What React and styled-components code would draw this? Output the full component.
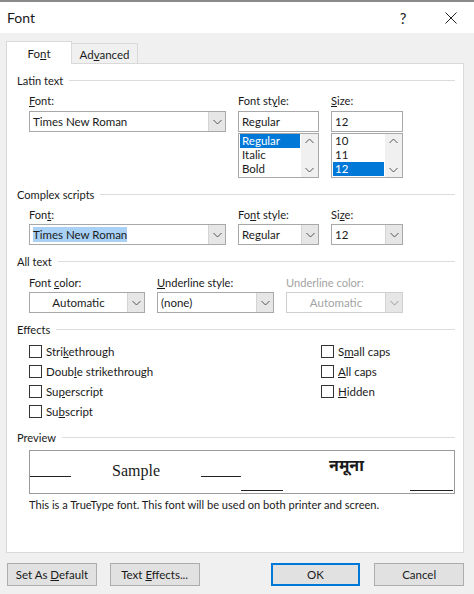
import React from "react";
import styled, { createGlobalStyle } from "styled-components";

const GlobalStyle = createGlobalStyle`
  html, body {
    margin: 0;
    padding: 0;
    background: #f0f0f0;
  }
  * {
    box-sizing: border-box;
  }
`;

const Dialog = styled.div`
  width: 474px;
  height: 594px;
  background: #f0f0f0;
  font-family: "Segoe UI", Lato, "Noto Sans", sans-serif;
  font-size: 11.1px;
  color: #1a1a1a;
  display: flex;
  flex-direction: column;
  overflow: hidden;
`;

const TopStrip = styled.div`
  height: 2px;
  background: #8a8a8a;
`;

const TitleBar = styled.div`
  height: 31px;
  background: #ffffff;
  display: flex;
  align-items: center;
  padding-left: 7px;
  font-size: 14px;
`;

const Title = styled.span`
  flex: 1;
`;

const TitleButton = styled.span`
  width: 46px;
  margin-right: ${(p) => p.$mr || 0}px;
  display: flex;
  justify-content: center;
  align-items: center;
  font-size: 15px;
  color: #222;
`;

const Body = styled.div`
  flex: 1;
  display: flex;
  flex-direction: column;
  padding: 8px 10px 0 6px;
`;

const Tabs = styled.div`
  display: flex;
  align-items: flex-end;
  height: 22px;
  position: relative;
  z-index: 1;
`;

const Tab = styled.div`
  width: 66px;
  height: ${(p) => (p.$active ? 23 : 20)}px;
  margin-bottom: ${(p) => (p.$active ? -1 : 0)}px;
  background: ${(p) => (p.$active ? "#ffffff" : "#f0f0f0")};
  border: 1px solid #d9d9d9;
  border-bottom: none;
  border-left: ${(p) => (p.$active ? "1px solid #d9d9d9" : "none")};
  display: flex;
  align-items: center;
  justify-content: center;
  font-size: 11.5px;
  padding-top: ${(p) => (p.$active ? 0 : 1)}px;
`;

const Panel = styled.div`
  height: 490px;
  background: #ffffff;
  border: 1px solid #d9d9d9;
  padding: 8px 8px 0 10px;
  display: flex;
  flex-direction: column;
`;

const SectionHeader = styled.div`
  display: flex;
  align-items: center;
  gap: 6px;
  height: 16px;
  margin-top: ${(p) => p.$mt || 0}px;
  span {
    white-space: nowrap;
  }
  &::after {
    content: "";
    flex: 1;
    border-top: 1px solid #dcdcdc;
  }
`;

const Indent = styled.div`
  padding-left: 12px;
  margin-top: ${(p) => p.$mt || 0}px;
`;

const FieldRow = styled.div`
  display: flex;
  gap: ${(p) => p.$gap || 12}px;
`;

const Field = styled.div`
  width: ${(p) => p.$w}px;
  display: flex;
  flex-direction: column;
`;

const Label = styled.div`
  height: 16px;
  line-height: 16px;
  margin-bottom: ${(p) => (p.$mb === undefined ? 2 : p.$mb)}px;
  color: ${(p) => (p.$disabled ? "#a3a3a3" : "#1a1a1a")};
`;

const TextBox = styled.div`
  height: 21px;
  border: 1px solid #a8a8a8;
  background: #fff;
  display: flex;
  align-items: center;
  padding-left: 3px;
  font-size: 11.5px;
`;

const Combo = styled.div`
  height: 21px;
  border: 1px solid ${(p) => (p.$disabled ? "#cfcfcf" : "#a8a8a8")};
  background: #fff;
  display: flex;
  align-items: stretch;
  font-size: 11.5px;
  color: ${(p) => (p.$disabled ? "#a3a3a3" : "#1a1a1a")};
`;

const ComboText = styled.div`
  flex: 1;
  display: flex;
  align-items: center;
  justify-content: ${(p) => (p.$center ? "center" : "flex-start")};
  padding-left: ${(p) => (p.$center ? 0 : 3)}px;
`;

const Selection = styled.span`
  background: #a9d1f5;
  line-height: 15px;
`;

const DropButton = styled.div`
  width: 17px;
  background: #e6e6e6;
  border-left: 1px solid #d4d4d4;
  display: flex;
  align-items: center;
  justify-content: center;
`;

const ListBox = styled.div`
  height: 45px;
  margin-top: 1px;
  border: 1px solid #a8a8a8;
  background: #fff;
  display: flex;
  overflow: hidden;
`;

const ListItems = styled.div`
  flex: 1;
  padding: 0 1px;
  display: flex;
  flex-direction: column;
`;

const ListItem = styled.div`
  height: 14px;
  line-height: 14px;
  padding-left: 2px;
  font-size: 11.5px;
  overflow: hidden;
  background: ${(p) => (p.$selected ? "#0078d7" : "transparent")};
  color: ${(p) => (p.$selected ? "#fff" : "#1a1a1a")};
`;

const ScrollBar = styled.div`
  width: 17px;
  background: #f0f0f0;
  display: flex;
  flex-direction: column;
  justify-content: space-between;
  align-items: center;
  padding: 4px 0;
`;

const Checks = styled.div`
  display: grid;
  grid-template-columns: 292px auto;
  grid-auto-flow: column;
  grid-template-rows: repeat(4, 20px);
  margin-top: 4px;
`;

const CheckRow = styled.label`
  display: flex;
  align-items: center;
  gap: 4px;
  font-size: 11.5px;
`;

const Box = styled.span`
  width: 13px;
  height: 13px;
  border: 1px solid #333;
  background: #fff;
`;

const PreviewBox = styled.div`
  height: 44px;
  margin-top: 5px;
  border: 1px solid #9a9a9a;
  display: flex;
  align-items: flex-start;
  overflow: hidden;
`;

const Blank = styled.span`
  width: ${(p) => p.$w}px;
  margin-top: ${(p) => p.$top}px;
  border-bottom: 1px solid #222;
  flex-shrink: 0;
`;

const SampleText = styled.span`
  width: ${(p) => p.$w}px;
  text-align: center;
  font-family: "Liberation Serif", "Times New Roman", serif;
  font-size: 16px;
  margin-top: ${(p) => p.$top}px;
  line-height: 20px;
  flex-shrink: 0;
`;

const DevaText = styled(SampleText)`
  font-family: "Noto Sans Devanagari", "Lohit Devanagari", "Noto Serif Devanagari", sans-serif;
  font-weight: 700;
  font-size: 16px;
`;

const InfoText = styled.div`
  margin-top: 3px;
  height: 16px;
  line-height: 16px;
`;

const ButtonRow = styled.div`
  display: flex;
  margin-top: 10px;
  padding-left: 1px;
`;

const Button = styled.div`
  width: 90px;
  height: 23px;
  background: #e1e1e1;
  border: 1px solid ${(p) => (p.$primary ? "#0078d7" : "#adadad")};
  box-shadow: ${(p) => (p.$primary ? "inset 0 0 0 1px #0078d7" : "none")};
  margin-left: ${(p) => p.$ml || 0}px;
  display: flex;
  align-items: center;
  justify-content: center;
  font-size: 11.5px;
`;

const Chevron = ({ up, color = "#555" }) => (
  <svg width="9" height="6" viewBox="0 0 9 6">
    <path
      d={up ? "M0.5 5 L4.5 1 L8.5 5" : "M0.5 1 L4.5 5 L8.5 1"}
      fill="none"
      stroke={color}
      strokeWidth="1"
    />
  </svg>
);

const CloseIcon = () => (
  <svg width="12" height="12" viewBox="0 0 12 12">
    <path d="M0.5 0.5 L11.5 11.5 M11.5 0.5 L0.5 11.5" stroke="#222" strokeWidth="1" />
  </svg>
);

const ComboBox = ({ children, center, disabled, highlight }) => (
  <Combo $disabled={disabled}>
    <ComboText $center={center}>
      {highlight ? <Selection>{children}</Selection> : <span>{children}</span>}
    </ComboText>
    <DropButton>
      <Chevron color={disabled ? "#999" : "#555"} />
    </DropButton>
  </Combo>
);

const Check = ({ children }) => (
  <CheckRow>
    <Box />
    <span>{children}</span>
  </CheckRow>
);

const List = ({ items, selected }) => (
  <ListBox>
    <ListItems>
      {items.map((it) => (
        <ListItem key={it} $selected={it === selected}>
          {it}
        </ListItem>
      ))}
    </ListItems>
    <ScrollBar>
      <Chevron up />
      <Chevron />
    </ScrollBar>
  </ListBox>
);

export default function App() {
  return (
    <>
      <GlobalStyle />
      <Dialog>
        <TopStrip />
        <TitleBar>
          <Title>Font</Title>
          <TitleButton $mr={2}>?</TitleButton>
          <TitleButton>
            <CloseIcon />
          </TitleButton>
        </TitleBar>
        <Body>
          <Tabs>
            <Tab $active>
              <span>
                Fo<u>n</u>t
              </span>
            </Tab>
            <Tab>
              <span>
                Ad<u>v</u>anced
              </span>
            </Tab>
          </Tabs>
          <Panel>
            <SectionHeader>
              <span>Latin text</span>
            </SectionHeader>
            <Indent $mt={5}>
              <FieldRow>
                <Field $w={197}>
                  <Label>
                    <u>F</u>ont:
                  </Label>
                  <ComboBox>Times New Roman</ComboBox>
                </Field>
                <Field $w={81}>
                  <Label>
                    Font st<u>y</u>le:
                  </Label>
                  <TextBox>Regular</TextBox>
                  <List items={["Regular", "Italic", "Bold"]} selected="Regular" />
                </Field>
                <Field $w={72}>
                  <Label>
                    <u>S</u>ize:
                  </Label>
                  <TextBox>12</TextBox>
                  <List items={["10", "11", "12"]} selected="12" />
                </Field>
              </FieldRow>
            </Indent>

            <SectionHeader $mt={8}>
              <span>Complex scripts</span>
            </SectionHeader>
            <Indent $mt={5}>
              <FieldRow>
                <Field $w={197}>
                  <Label $mb={1}>
                    Fon<u>t</u>:
                  </Label>
                  <ComboBox highlight>Times New Roman</ComboBox>
                </Field>
                <Field $w={81}>
                  <Label $mb={1}>
                    Fo<u>n</u>t style:
                  </Label>
                  <ComboBox>Regular</ComboBox>
                </Field>
                <Field $w={72}>
                  <Label $mb={1}>
                    Si<u>z</u>e:
                  </Label>
                  <ComboBox>12</ComboBox>
                </Field>
              </FieldRow>
            </Indent>

            <SectionHeader $mt={8}>
              <span>All text</span>
            </SectionHeader>
            <Indent $mt={6}>
              <FieldRow $gap={12}>
                <Field $w={116}>
                  <Label $mb={1}>
                    Font <u>c</u>olor:
                  </Label>
                  <ComboBox center>Automatic</ComboBox>
                </Field>
                <Field $w={117}>
                  <Label $mb={1}>
                    <u>U</u>nderline style:
                  </Label>
                  <ComboBox>(none)</ComboBox>
                </Field>
                <Field $w={117}>
                  <Label $mb={1} $disabled>
                    Underline color:
                  </Label>
                  <ComboBox center disabled>
                    Automatic
                  </ComboBox>
                </Field>
              </FieldRow>
            </Indent>

            <SectionHeader $mt={8}>
              <span>Effects</span>
            </SectionHeader>
            <Indent>
              <Checks>
                <Check>
                  Stri<u>k</u>ethrough
                </Check>
                <Check>
                  Doub<u>l</u>e strikethrough
                </Check>
                <Check>
                  Su<u>p</u>erscript
                </Check>
                <Check>
                  Su<u>b</u>script
                </Check>
                <Check>
                  S<u>m</u>all caps
                </Check>
                <Check>
                  <u>A</u>ll caps
                </Check>
                <Check>
                  <u>H</u>idden
                </Check>
              </Checks>
            </Indent>

            <SectionHeader $mt={8}>
              <span>Preview</span>
            </SectionHeader>
            <Indent>
              <PreviewBox>
                <Blank $w={41} $top={25} />
                <SampleText $w={130} $top={10}>
                  Sample
                </SampleText>
                <Blank $w={40} $top={25} />
                <Blank $w={42} $top={39} />
                <DevaText $w={127} $top={7}>
                  नमूना
                </DevaText>
                <Blank $w={43} $top={39} />
              </PreviewBox>
              <InfoText>
                This is a TrueType font. This font will be used on both printer and screen.
              </InfoText>
            </Indent>
          </Panel>
          <ButtonRow>
            <Button>
              <span>
                Set As <u>D</u>efault
              </span>
            </Button>
            <Button $ml={13}>
              <span>
                Text <u>E</u>ffects...
              </span>
            </Button>
            <Button $primary $ml={71}>
              OK
            </Button>
            <Button $ml={14}>Cancel</Button>
          </ButtonRow>
        </Body>
      </Dialog>
    </>
  );
}
